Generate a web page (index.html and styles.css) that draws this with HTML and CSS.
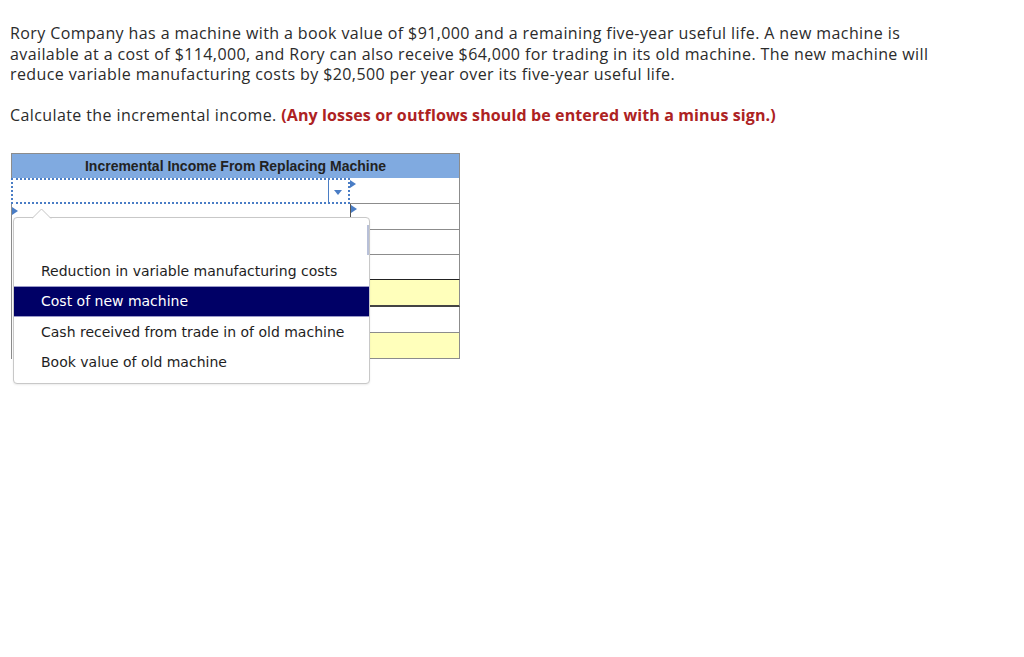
FILE: index.html
```html
<!DOCTYPE html>
<html>
<head>
<meta charset="utf-8">
<link rel="stylesheet" href="styles.css">
</head>
<body>
<div class="page">
  <p class="question">Rory Company has a machine with a book value of $91,000 and a remaining five-year useful life. A new machine is<br>available at a cost of $114,000, and Rory can also receive $64,000 for trading in its old machine. The new machine will<br>reduce variable manufacturing costs by $20,500 per year over its five-year useful life.</p>
  <p class="question instr">Calculate the incremental income. <strong class="warn">(Any losses or outflows should be entered with a minus sign.)</strong></p>

  <div class="sheet">
    <div class="grid">
      <div class="head">Incremental Income From Replacing Machine</div>
      <div class="row r1">
        <div class="lbl focus">
          <span class="sel"></span>
          <span class="caret"></span>
          <span class="tri tri-top"></span>
        </div>
        <div class="amt"></div>
      </div>
      <div class="row r2">
        <div class="lbl"><span class="tri tri-left"></span></div>
        <div class="amt"><span class="tri tri-amt"></span></div>
      </div>
      <div class="row r3"><div class="lbl"></div><div class="amt"></div></div>
      <div class="row r4"><div class="lbl"></div><div class="amt"></div></div>
      <div class="row r5"><div class="lbl"></div><div class="amt"></div></div>
      <div class="row r6"><div class="lbl"></div><div class="amt"></div></div>
      <div class="row r7"><div class="lbl"></div><div class="amt"></div></div>
    </div>

    <div class="menu">
      <svg class="notch" width="20" height="11" viewBox="0 0 20 11"><polyline points="0,10.5 9.5,1 19,10.5" fill="#fff" stroke="#c4c4c4" stroke-width="1"/></svg>
      <span class="scroll"></span>
      <ul class="opts">
        <li class="opt blank">&nbsp;</li>
        <li class="opt">Reduction in variable manufacturing costs</li>
        <li class="opt on">Cost of new machine</li>
        <li class="opt">Cash received from trade in of old machine</li>
        <li class="opt">Book value of old machine</li>
      </ul>
    </div>
  </div>
</div>
</body>
</html>
```

FILE: styles.css
```css
html, body { margin: 0; padding: 0; background: #fff; }
body { font-family: "Open Sans", "Lato", sans-serif; color: #222; min-height: 657px; }

.page { padding: 23px 0 0 10px; }

.question {
  margin: 0;
  width: 1000px;
  font-size: 16px;
  line-height: 20.5px;
  letter-spacing: 0.4px;
  color: #2b2b2b;
  white-space: nowrap;
}
.instr { margin-top: 20px; }
.warn { color: #ad2222; font-weight: 700; letter-spacing: 0.12px; }

.sheet { position: relative; margin-top: 28px; margin-left: 1px; width: 449px; padding-bottom: 40px; }

.grid { width: 449px; display: flex; flex-direction: column; }
.grid * { box-sizing: border-box; }
.head {
  height: 25px;
  background: #80aae0;
  border: 1px solid #8c8c8c;
  border-bottom: none;
  font-family: "Liberation Sans", Arial, sans-serif;
  font-size: 14px;
  font-weight: 700;
  color: #222;
  text-align: center;
  line-height: 24px;
}
.row { display: flex; height: 26px; }
.lbl { width: 339px; border-left: 1px solid #8c8c8c; position: relative; }
.amt {
  flex: 1;
  position: relative;
  border-right: 1px solid #8c8c8c;
  border-bottom: 1px solid #8c8c8c;
  border-left: 1px solid #555;
}
.r1 .amt { border-left: none; }
.r3, .r4 { height: 25px; }
.r4 .amt { border-bottom-color: #222; }
.r5 .amt { background: #ffffbb; border-bottom: 2px solid #444; height: 27px; }
.r5 { height: 27px; }
.r6 .amt { border-bottom-color: #8c8c8c; }
.r7 .amt { background: #ffffbb; }

.focus {
  border: 2px dotted #4a7dc5;
}
.sel {
  position: absolute;
  left: 315px;
  top: 0;
  bottom: 0;
  width: 0;
  border-left: 1px solid #4a7dc5;
}
.caret {
  position: absolute;
  left: 321px;
  top: 10px;
  width: 0; height: 0;
  border-left: 4px solid transparent;
  border-right: 4px solid transparent;
  border-top: 5px solid #4a7dc5;
}
.tri {
  position: absolute;
  width: 0; height: 0;
  border-top: 4px solid transparent;
  border-bottom: 4px solid transparent;
  border-left: 6px solid #4a7dc5;
}
.tri-top { right: -8px; top: 0; }
.tri-left { left: 0; top: 3px; }
.tri-amt { left: 0; top: 1px; }

.menu {
  position: absolute;
  left: 2px;
  top: 64px;
  width: 357px;
  height: 167px;
  box-sizing: border-box;
  background: #fff;
  border: 1px solid #c8c8c8;
  border-radius: 4px;
  box-shadow: 0 1px 2px rgba(0,0,0,0.08);
  font-family: "DejaVu Sans", Verdana, sans-serif;
}
.notch {
  position: absolute;
  left: 18px;
  top: -10px;
  display: block;
}
.scroll {
  position: absolute;
  right: 0;
  top: 7px;
  width: 2px;
  height: 30px;
  background: #b8c0d8;
}
.opts { list-style: none; margin: 0; padding: 7px 0 0; }
.opt {
  height: 30.5px;
  line-height: 30px;
  padding-left: 27px;
  font-size: 14px;
  color: #1e1e1e;
  white-space: nowrap;
}
.opt.on { background: #000066; color: #fff; box-shadow: inset 0 1px 0 #9a9ac8, inset 0 -1px 0 #9a9ac8; }
```
